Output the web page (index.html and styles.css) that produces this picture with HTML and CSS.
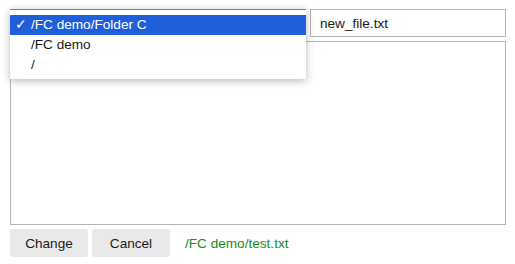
FILE: index.html
```html
<!DOCTYPE html>
<html lang="en">
<head>
  <meta charset="UTF-8" />
  <title>Save As</title>
  <link rel="stylesheet" href="styles.css">
</head>
<body>

  <div class="dialog">
    <div class="top-row">
      <div class="select-box"></div>
      <div class="name-input">new_file.txt</div>
    </div>

    <div class="text-area"></div>

    <div class="actions">
      <button class="btn">Change</button>
      <button class="btn">Cancel</button>
      <span class="status">/FC demo/test.txt</span>
    </div>

    <!-- open folder dropdown -->
    <ul class="dropdown">
      <li class="option selected"><span class="check">✓</span>/FC demo/Folder C</li>
      <li class="option"><span class="check"></span>/FC demo</li>
      <li class="option"><span class="check"></span>/</li>
    </ul>
  </div>

</body>
</html>
```

FILE: styles.css
```css
* {
  box-sizing: border-box;
}

body {
  margin: 0;
  padding: 9px 9px 0 10px;
  font-family: "Liberation Sans", Arial, sans-serif;
  font-size: 13.6px;
  color: #1a1a1a;
  background: #fff;
}

.dialog {
  position: relative;
  width: 496px;
}

.top-row {
  display: flex;
  gap: 4px;
}

.select-box {
  width: 296px;
  height: 28px;
  border: 1px solid #b5b5b5;
}

.name-input {
  width: 196px;
  height: 28px;
  border: 1px solid #b5b5b5;
  padding: 6px 9px;
  line-height: 15px;
}

.text-area {
  margin-top: 4px;
  height: 184px;
  border: 1px solid #b5b5b5;
}

.actions {
  margin-top: 4px;
  display: flex;
  align-items: center;
  gap: 4px;
}

.btn {
  width: 78px;
  height: 28px;
  border: none;
  border-radius: 3px;
  background: #e9e9e9;
  font-family: inherit;
  font-size: 13.6px;
  color: #1a1a1a;
  padding: 0;
}

.status {
  margin-left: 11px;
  color: #248a18;
}

.dropdown {
  position: absolute;
  left: 0;
  top: 0;
  width: 296px;
  margin: 0;
  padding: 5px 0 4px;
  list-style: none;
  background: #fff;
  border-top: 1px solid #4a86d8;
  box-shadow: 0 2px 8px rgba(0,0,0,0.28);
}

.option {
  display: flex;
  height: 20px;
  line-height: 20px;
  padding-left: 5px;
}

.option.selected {
  background: #1f5fdc;
  color: #fff;
}

.check {
  flex: 0 0 16px;
}
```
